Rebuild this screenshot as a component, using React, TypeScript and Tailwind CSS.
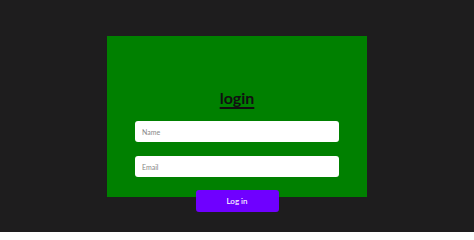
export default function App() {
  return (
    <div className="h-[232px] w-full overflow-hidden bg-[#1e1d1e] pt-[36px] font-['Lato',sans-serif]">
      <div className="mx-auto flex h-[161px] w-[260px] flex-col items-center bg-[#008000] pt-[51px]">
        <h1 className="text-[16px] font-bold leading-[22px] text-[#111] underline decoration-2 underline-offset-[3px]">
          login
        </h1>
        <input
          placeholder="Name"
          className="mt-[12px] h-[21px] w-[204px] shrink-0 rounded-[3px] bg-white px-[7px] text-[7px] text-gray-800 outline-none placeholder:text-[#888]"
        />
        <input
          placeholder="Email"
          className="mt-[14px] h-[21px] w-[204px] shrink-0 rounded-[3px] bg-white px-[7px] text-[7px] text-gray-800 outline-none placeholder:text-[#888]"
        />
        <button className="mt-[13px] h-[22px] w-[83px] shrink-0 rounded-[3px] bg-[#6f00ff] text-[8px] font-medium text-white">
          Log in
        </button>
      </div>
    </div>
  );
}
